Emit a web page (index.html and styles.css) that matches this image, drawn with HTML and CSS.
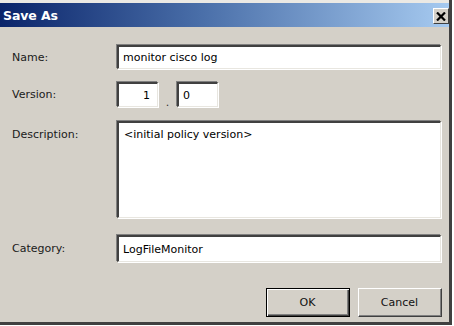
FILE: index.html
```html
<!DOCTYPE html>
<html>
<head>
<meta charset="utf-8">
<link rel="stylesheet" href="styles.css">
</head>
<body>
<div class="dialog">
  <div class="topstrip"></div>
  <div class="titlebar">
    <span class="title">Save As</span>
    <span class="close"><svg width="10" height="9" viewBox="0 0 10 9"><path d="M1 0.5 L9 8.5 M9 0.5 L1 8.5" stroke="#000" stroke-width="2.2"/></svg></span>
  </div>
  <div class="form">
    <div class="row r-name">
      <div class="label">Name:</div>
      <div class="field grow">monitor cisco log</div>
    </div>
    <div class="row r-version">
      <div class="label">Version:</div>
      <div class="field vbox right">1</div>
      <span class="dot">.</span>
      <div class="field vbox">0</div>
    </div>
    <div class="row r-desc">
      <div class="label top">Description:</div>
      <div class="field grow desc">&lt;initial policy version&gt;</div>
    </div>
    <div class="row r-cat">
      <div class="label">Category:</div>
      <div class="field grow">LogFileMonitor</div>
    </div>
  </div>
  <div class="buttons">
    <div class="btn default"><span class="inner">OK</span></div>
    <div class="btn"><span class="inner">Cancel</span></div>
  </div>
</div>
</body>
</html>
```
FILE: styles.css
```css
html, body {
  margin: 0;
  padding: 0;
  background: #ffffff;
}
body {
  font-family: "DejaVu Sans", "Liberation Sans", sans-serif;
  font-size: 11px;
  color: #111;
}
.dialog {
  width: 449px;
  height: 322px;
  background: #d4d0c8;
  border-right: 3px solid #404040;
  border-bottom: 3px solid #404040;
  display: flex;
  flex-direction: column;
}
.topstrip {
  height: 3px;
  background: #ebe9e4;
}
.titlebar {
  height: 24px;
  background: linear-gradient(to right, #0a246a 0%, #4a6fa9 45%, #a6caf0 100%);
  display: flex;
  align-items: center;
  justify-content: space-between;
}
.title {
  color: #fff;
  font-weight: bold;
  font-size: 12.5px;
  padding-left: 3px;
  letter-spacing: -0.1px;
}
.close {
  width: 16px;
  height: 16px;
  box-sizing: border-box;
  background: #d4d0c8;
  border-top: 1px solid #fff;
  border-left: 1px solid #fff;
  border-right: 1px solid #404040;
  border-bottom: 1px solid #404040;
  display: flex;
  align-items: center;
  justify-content: center;
  margin-top: 2px;
}
.form {
  display: flex;
  flex-direction: column;
  padding: 0 8px 0 12px;
  margin-top: 18px;
}
.row {
  display: flex;
  align-items: center;
}
.r-name { height: 24px; }
.r-version { height: 25px; margin-top: 13px; }
.r-desc { height: 97px; margin-top: 14px; align-items: stretch; }
.r-cat { height: 27px; margin-top: 17px; }
.label {
  width: 105px;
  flex: none;
  color: #1a1a1a;
}
.label.top {
  padding-top: 7px;
}
.field {
  background: #fff;
  border-top: 2px solid #404040;
  border-left: 2px solid #404040;
  border-right: 1px solid #e8e6e0;
  border-bottom: 1px solid #e8e6e0;
  box-shadow: -1px -1px 0 #808080, 1px 1px 0 #fff;
  box-sizing: border-box;
  height: 100%;
  display: flex;
  align-items: center;
  padding-left: 4px;
  color: #000;
}
.grow {
  flex: 1;
}
.vbox {
  width: 41px;
}
.vbox.right {
  justify-content: flex-end;
  padding-right: 7px;
}
.dot {
  width: 19px;
  text-align: center;
  align-self: flex-end;
  line-height: 8px;
  color: #333;
}
.desc {
  align-items: flex-start;
  padding-top: 5px;
  padding-left: 5px;
}
.buttons {
  display: flex;
  justify-content: flex-end;
  gap: 8px;
  padding-right: 7px;
  margin-top: 26px;
}
.btn {
  width: 84px;
  height: 29px;
  box-sizing: border-box;
  border-top: 1px solid #fff;
  border-left: 1px solid #fff;
  border-right: 1px solid #404040;
  border-bottom: 1px solid #404040;
  background: #d4d0c8;
  display: flex;
}
.btn .inner {
  flex: 1;
  display: flex;
  align-items: center;
  justify-content: center;
  border-right: 1px solid #808080;
  border-bottom: 1px solid #808080;
  color: #111;
}
.btn.default {
  border: 1px solid #000;
  box-shadow: inset 1px 1px 0 #fff, inset -1px -1px 0 #404040;
}
.btn.default .inner {
  margin: 1px;
}
```
